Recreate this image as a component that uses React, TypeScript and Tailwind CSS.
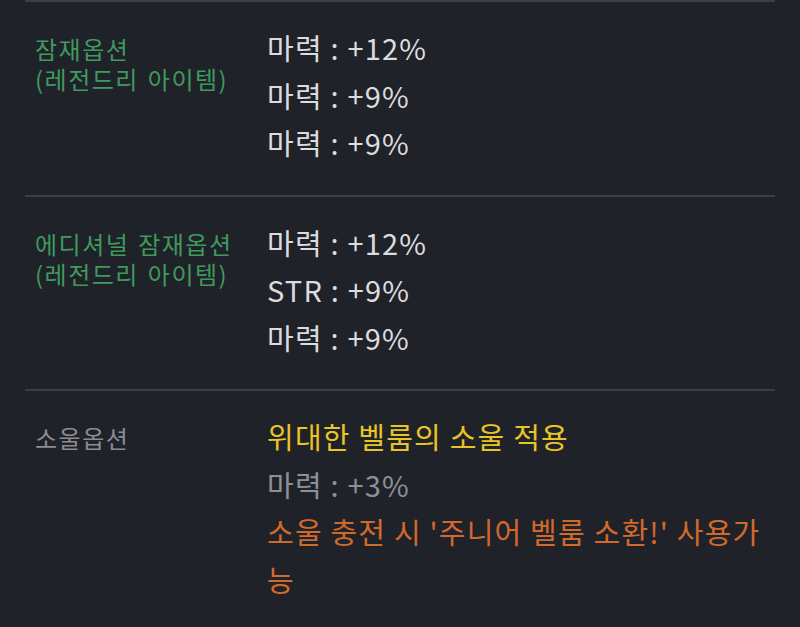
import React from "react";

const font = { fontFamily: '"Noto Sans CJK KR", "Noto Sans", sans-serif' };

function Row({ label, labelClass, children }: { label: React.ReactNode; labelClass: string; children: React.ReactNode }) {
  return (
    <div className="mx-[25px] border-t-2 border-[#3c3e45] flex pt-[22px] pb-[28px]">
      <div className={`w-[242px] pl-[10px] pt-[10px] text-[24px] leading-[30px] tracking-[1.5px] [word-spacing:2px] ${labelClass}`}>{label}</div>
      <div className="flex-1 text-[29px] leading-[47.5px] tracking-[1.2px]">{children}</div>
    </div>
  );
}

export default function App() {
  return (
    <div className="w-[800px] h-[627px] bg-[#20222a] overflow-hidden" style={font}>
      <Row label={<><div>잠재옵션</div><div>(레전드리 아이템)</div></>} labelClass="text-[#3f9a5c]">
        <div className="text-[#dcdcde]">마력 : +12%</div>
        <div className="text-[#dcdcde]">마력 : +9%</div>
        <div className="text-[#dcdcde]">마력 : +9%</div>
      </Row>
      <Row label={<><div>에디셔널 잠재옵션</div><div>(레전드리 아이템)</div></>} labelClass="text-[#3f9a5c]">
        <div className="text-[#dcdcde]">마력 : +12%</div>
        <div className="text-[#dcdcde]">STR : +9%</div>
        <div className="text-[#dcdcde]">마력 : +9%</div>
      </Row>
      <Row label={<div>소울옵션</div>} labelClass="text-[#8b8d93]">
        <div className="text-[#e9c425]">위대한 벨룸의 소울 적용</div>
        <div className="text-[#8e9096]">마력 : +3%</div>
        <div className="text-[#d2692c]">소울 충전 시 '주니어 벨룸 소환!' 사용가<br />능</div>
      </Row>
    </div>
  );
}
